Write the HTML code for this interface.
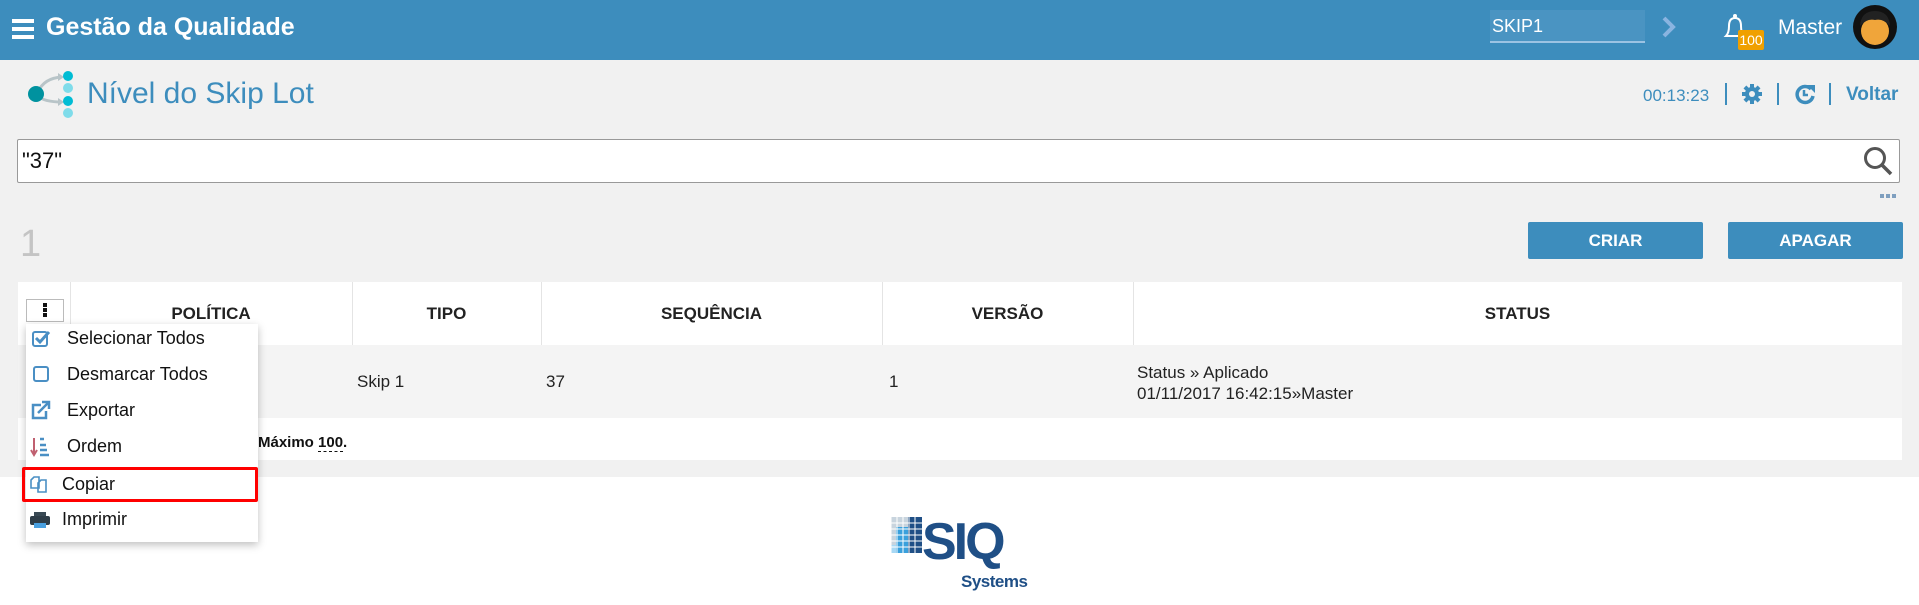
<!DOCTYPE html>
<html><head><meta charset="utf-8"><style>
*{margin:0;padding:0;box-sizing:border-box}
body{width:1919px;height:605px;background:#f1f1f1;font-family:"Liberation Sans",Arial,sans-serif;position:relative;overflow:hidden;color:#111}
.a{position:absolute}
.hdr{left:0;top:0;width:1919px;height:60px;background:#3d8dbd}
.th{position:absolute;top:282px;height:63px;line-height:63px;text-align:center;font-size:17px;font-weight:bold;color:#222}
.cell{position:absolute;font-size:17px;color:#222}
.mi{position:absolute;left:67px;font-size:18px;color:#111}
</style></head><body>
<div class="a hdr"></div>
<div class="a" style="left:12px;top:19px;width:22px;height:4px;background:#fff;box-shadow:0 8px 0 #fff,0 16px 0 #fff"></div>
<div class="a" style="left:46px;top:13px;font-size:25px;font-weight:bold;color:#fff">Gestão da Qualidade</div>
<div class="a" style="left:1490px;top:10px;width:155px;height:33px;background:#4a94c2;border-bottom:2px solid #9cc3e3;color:#fff;font-size:18px;line-height:33px;padding-left:2px">SKIP1</div>
<svg class="a" style="left:1660px;top:14px" width="18" height="26"><path d="M4 4 L13 13 L4 22" stroke="#8ab4e0" stroke-width="4" fill="none"/></svg>
<svg class="a" style="left:1722px;top:12px" width="26" height="30"><path d="M4 24 Q7 21 7 14 Q7 6 13 6 Q19 6 19 14 Q19 21 22 24 Z" stroke="#fff" stroke-width="2" fill="none"/><circle cx="13" cy="4" r="2" fill="#fff"/></svg>
<div class="a" style="left:1738px;top:30px;width:26px;height:20px;background:#f0a000;border-radius:2px;color:#fff;font-size:14px;line-height:20px;text-align:center">100</div>
<div class="a" style="left:1778px;top:16px;font-size:21px;color:#fff">Master</div>
<svg class="a" style="left:1853px;top:5px" width="44" height="44"><circle cx="22" cy="22" r="22" fill="#111"/><ellipse cx="22" cy="26" rx="14" ry="14" fill="#f0a53a"/><path d="M7 21 Q8 6 22 6 Q36 6 37 21 Q30 13 22 15 Q14 13 7 21Z" fill="#222"/></svg>

<svg class="a" style="left:24px;top:68px" width="56" height="54"><path d="M14 24 Q20 10 38 9" stroke="#b8c4c8" stroke-width="3" fill="none"/><path d="M14 28 Q20 34 38 34" stroke="#b8c4c8" stroke-width="3" fill="none"/><path d="M34 5 L40 9 L34 13Z M34 30 L40 34 L34 38Z" fill="#b8c4c8"/><circle cx="12" cy="26" r="8" fill="#00929f"/><circle cx="44" cy="8" r="5" fill="#00bcd4"/><circle cx="44" cy="20" r="5" fill="#7fdcea"/><circle cx="44" cy="33" r="5" fill="#00bcd4"/><circle cx="44" cy="45" r="5" fill="#7fdcea"/></svg>
<div class="a" style="left:87px;top:77px;font-size:30px;color:#3d8dbd">Nível do Skip Lot</div>
<div class="a" style="left:1643px;top:86px;font-size:17px;color:#3d8dbd">00:13:23</div>
<div class="a" style="left:1725px;top:83px;width:2px;height:22px;background:#3d8dbd"></div>
<svg class="a" style="left:1741px;top:83px" width="22" height="22" viewBox="0 0 22 22"><g fill="#3d8dbd"><circle cx="11" cy="11" r="7"/><rect x="9" y="1" width="4" height="20"/><rect x="1" y="9" width="20" height="4"/><rect x="9" y="1" width="4" height="20" transform="rotate(45 11 11)"/><rect x="9" y="1" width="4" height="20" transform="rotate(-45 11 11)"/></g><circle cx="11" cy="11" r="3" fill="#f1f1f1"/></svg>
<div class="a" style="left:1777px;top:83px;width:2px;height:22px;background:#3d8dbd"></div>
<svg class="a" style="left:1793px;top:82px" width="24" height="24"><path d="M18 7 A8 8 0 1 0 20 14" stroke="#3d8dbd" stroke-width="3.5" fill="none"/><path d="M14 3 L22 3 L22 11Z" fill="#3d8dbd"/><path d="M11 8 V13 H15" stroke="#3d8dbd" stroke-width="2.5" fill="none"/></svg>
<div class="a" style="left:1829px;top:83px;width:2px;height:22px;background:#3d8dbd"></div>
<div class="a" style="left:1846px;top:84px;font-size:19px;font-weight:bold;color:#3d8dbd">Voltar</div>

<div class="a" style="left:17px;top:139px;width:1883px;height:44px;background:#fff;border:1px solid #999;border-radius:2px"></div>
<div class="a" style="left:22px;top:148px;font-size:22px;color:#111">"37"</div>
<svg class="a" style="left:1862px;top:145px" width="34" height="34"><circle cx="13" cy="13" r="9.5" stroke="#555" stroke-width="3" fill="none"/><path d="M20 20 L29 29" stroke="#555" stroke-width="3.5"/></svg>
<div class="a" style="left:1880px;top:194px;width:4px;height:4px;background:#7f9fbf;box-shadow:6px 0 0 #7f9fbf,12px 0 0 #7f9fbf"></div>

<div class="a" style="left:20px;top:223px;font-size:38px;color:#c4c4c4">1</div>
<div class="a" style="left:1528px;top:222px;width:175px;height:37px;background:#3d8dbd;border-radius:2px;color:#fff;font-weight:bold;font-size:17px;text-align:center;line-height:37px">CRIAR</div>
<div class="a" style="left:1728px;top:222px;width:175px;height:37px;background:#3d8dbd;border-radius:2px;color:#fff;font-weight:bold;font-size:17px;text-align:center;line-height:37px">APAGAR</div>

<div class="a" style="left:18px;top:282px;width:1884px;height:63px;background:#fff"></div>
<div class="a" style="left:18px;top:345px;width:1884px;height:73px;background:#f4f4f4"></div>
<div class="a" style="left:18px;top:418px;width:1884px;height:42px;background:#fff"></div>
<div class="a" style="left:0;top:477px;width:1919px;height:128px;background:#fff"></div>
<div class="a" style="left:70px;top:282px;width:1px;height:63px;background:#e4e4e4"></div>
<div class="a" style="left:352px;top:282px;width:1px;height:63px;background:#e4e4e4"></div>
<div class="a" style="left:541px;top:282px;width:1px;height:63px;background:#e4e4e4"></div>
<div class="a" style="left:882px;top:282px;width:1px;height:63px;background:#e4e4e4"></div>
<div class="a" style="left:1133px;top:282px;width:1px;height:63px;background:#e4e4e4"></div>
<div class="th" style="left:70px;width:282px">POLÍTICA</div>
<div class="th" style="left:352px;width:189px">TIPO</div>
<div class="th" style="left:541px;width:341px">SEQUÊNCIA</div>
<div class="th" style="left:882px;width:251px">VERSÃO</div>
<div class="th" style="left:1133px;width:769px">STATUS</div>
<div class="a" style="left:26px;top:299px;width:38px;height:23px;border:1px solid #bbb;background:#fff"></div>
<div class="a" style="left:43px;top:303px;width:4px;height:4px;background:#111;box-shadow:0 5px 0 #111,0 10px 0 #111"></div>
<div class="cell" style="left:357px;top:372px">Skip 1</div>
<div class="cell" style="left:546px;top:372px">37</div>
<div class="cell" style="left:889px;top:372px">1</div>
<div class="cell" style="left:1137px;top:362px;line-height:21px">Status » Aplicado<br>01/11/2017 16:42:15»Master</div>
<div class="a" style="left:258px;top:434px;font-size:15px;font-weight:bold;color:#111">Máximo <span style="border-bottom:1px dashed #111">100</span>.</div>

<div class="a" style="left:26px;top:324px;width:232px;height:218px;background:#fff;box-shadow:0 3px 8px rgba(0,0,0,.25)"></div>
<svg class="a" style="left:30px;top:328px" width="22" height="22"><rect x="3" y="4" width="14" height="14" rx="2" stroke="#4a8fc4" stroke-width="2" fill="none"/><path d="M6 10 L10 14 L19 4" stroke="#4a8fc4" stroke-width="3" fill="none"/></svg>
<div class="mi" style="top:328px">Selecionar Todos</div>
<svg class="a" style="left:30px;top:364px" width="22" height="22"><rect x="4" y="3" width="14" height="14" rx="2" stroke="#4a8fc4" stroke-width="2" fill="none"/></svg>
<div class="mi" style="top:364px">Desmarcar Todos</div>
<svg class="a" style="left:29px;top:399px" width="24" height="24"><path d="M12 6 H4 V19 H17 V12" stroke="#4a8fc4" stroke-width="2.5" fill="none"/><path d="M9 14 L19 4 M13 3 H20 V10" stroke="#4a8fc4" stroke-width="2.5" fill="none"/></svg>
<div class="mi" style="top:400px">Exportar</div>
<svg class="a" style="left:30px;top:436px" width="24" height="24"><path d="M4 2 V18 M1 14 L4 19 L7 14" stroke="#c06070" stroke-width="2" fill="none"/><path d="M10 3h4M10 9h6M10 14h7M10 19h9" stroke="#4a8fc4" stroke-width="2.5"/></svg>
<div class="mi" style="top:436px">Ordem</div>
<div class="a" style="left:22px;top:467px;width:236px;height:35px;border:3px solid #f00;border-radius:2px"></div>
<svg class="a" style="left:28px;top:474px" width="24" height="22"><path d="M3 6 L6 3 H11 V14 H3Z M10 9 L13 6 H18 V18 H10Z" stroke="#4a8fc4" stroke-width="1.6" fill="#fff"/></svg>
<div class="a" style="left:62px;top:474px;font-size:18px;color:#111">Copiar</div>
<svg class="a" style="left:29px;top:511px" width="22" height="18"><rect x="5" y="1" width="12" height="5" fill="#3a4a55"/><rect x="1" y="5" width="20" height="9" rx="2" fill="#2f3d48"/><rect x="5" y="12" width="12" height="5" fill="#4aa0e0"/></svg>
<div class="a" style="left:62px;top:509px;font-size:18px;color:#111">Imprimir</div>

<svg class="a" style="left:884px;top:517px" width="40" height="38"><g>
<rect x="0" y="0" width="38" height="36" fill="#c8d4de"/><rect x="0" y="0" width="7" height="36" fill="#fff"/>
<rect x="24" y="0" width="14" height="36" fill="#1f4f86"/><rect x="12" y="10" width="12" height="26" fill="#3aa0dc"/><rect x="7" y="28" width="5" height="8" fill="#a8d8f4"/></g>
<path d="M0 6h38M0 12h38M0 18h38M0 24h38M0 30h38M7 0v36M13 0v36M19 0v36M25 0v36M31 0v36" stroke="#fff" stroke-width="1"/></svg>
<div class="a" style="left:922px;top:512px;font-size:52px;font-weight:bold;color:#1f4f86;letter-spacing:-3px;line-height:60px">SIQ</div>
<div class="a" style="left:961px;top:572px;font-size:17px;font-weight:bold;color:#1f4f86;letter-spacing:-0.5px">Systems</div>
</body></html>
